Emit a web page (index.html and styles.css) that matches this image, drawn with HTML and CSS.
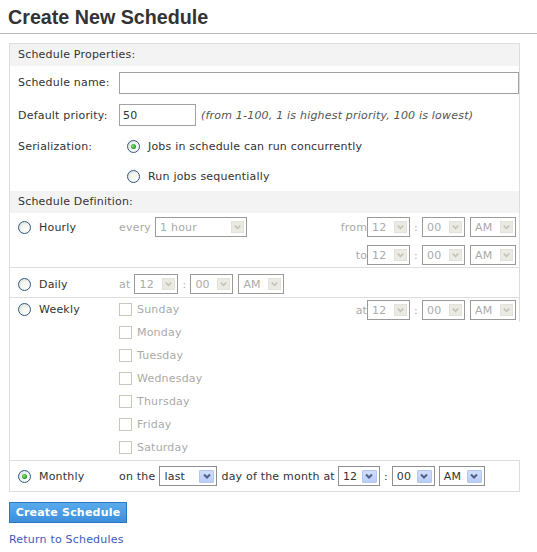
FILE: index.html
```html
<!DOCTYPE html>
<html>
<head>
<meta charset="utf-8">
<title>Create New Schedule</title>
<link rel="stylesheet" href="styles.css">
</head>
<body>
<h1 class="title">Create New Schedule</h1>
<div class="box">
  <div class="sec-head">Schedule Properties:</div>
  <div class="prop-row r1"><span class="lbl">Schedule name:</span><input class="txt name" type="text"></div>
  <div class="prop-row r2"><span class="lbl">Default priority:</span><input class="txt prio" type="text" value="50"><span class="hint">(from 1-100, 1 is highest priority, 100 is lowest)</span></div>
  <div class="prop-row r3"><span class="lbl">Serialization:</span><span class="radio on"></span><span class="opt">Jobs in schedule can run concurrently</span></div>
  <div class="prop-row r4"><span class="lbl"></span><span class="radio"></span><span class="opt">Run jobs sequentially</span></div>
  <div class="sec-head">Schedule Definition:</div>

  <div class="def hourly">
    <div class="dhead"><span class="radio"></span><span class="dlbl">Hourly</span></div>
    <div class="dbody split">
      <div class="line"><span class="muted gap">every</span><span class="sel dis w-every"><span class="v">1 hour</span><span class="arr"><svg viewBox="0 0 12 12"><path d="M3 4.5 L6 7.5 L9 4.5"/></svg></span></span></div>
      <div class="rcol">
        <div class="line"><span class="muted">from</span><span class="sel dis w12"><span class="v">12</span><span class="arr"><svg viewBox="0 0 12 12"><path d="M3 4.5 L6 7.5 L9 4.5"/></svg></span></span><span class="colon muted">:</span><span class="sel dis w00"><span class="v">00</span><span class="arr"><svg viewBox="0 0 12 12"><path d="M3 4.5 L6 7.5 L9 4.5"/></svg></span></span><span class="sel dis wam"><span class="v">AM</span><span class="arr"><svg viewBox="0 0 12 12"><path d="M3 4.5 L6 7.5 L9 4.5"/></svg></span></span></div>
        <div class="line"><span class="muted">to</span><span class="sel dis w12"><span class="v">12</span><span class="arr"><svg viewBox="0 0 12 12"><path d="M3 4.5 L6 7.5 L9 4.5"/></svg></span></span><span class="colon muted">:</span><span class="sel dis w00"><span class="v">00</span><span class="arr"><svg viewBox="0 0 12 12"><path d="M3 4.5 L6 7.5 L9 4.5"/></svg></span></span><span class="sel dis wam"><span class="v">AM</span><span class="arr"><svg viewBox="0 0 12 12"><path d="M3 4.5 L6 7.5 L9 4.5"/></svg></span></span></div>
      </div>
    </div>
  </div>

  <div class="def daily">
    <div class="dhead"><span class="radio"></span><span class="dlbl">Daily</span></div>
    <div class="dbody">
      <div class="line"><span class="muted gap">at</span><span class="sel dis w12d"><span class="v">12</span><span class="arr"><svg viewBox="0 0 12 12"><path d="M3 4.5 L6 7.5 L9 4.5"/></svg></span></span><span class="colon muted">:</span><span class="sel dis w00"><span class="v">00</span><span class="arr"><svg viewBox="0 0 12 12"><path d="M3 4.5 L6 7.5 L9 4.5"/></svg></span></span><span class="sel dis wam"><span class="v">AM</span><span class="arr"><svg viewBox="0 0 12 12"><path d="M3 4.5 L6 7.5 L9 4.5"/></svg></span></span></div>
    </div>
  </div>

  <div class="def weekly">
    <div class="dhead"><span class="radio"></span><span class="dlbl">Weekly</span></div>
    <div class="days">
      <div class="day"><span class="cb"></span>Sunday</div>
      <div class="day"><span class="cb"></span>Monday</div>
      <div class="day"><span class="cb"></span>Tuesday</div>
      <div class="day"><span class="cb"></span>Wednesday</div>
      <div class="day"><span class="cb"></span>Thursday</div>
      <div class="day"><span class="cb"></span>Friday</div>
      <div class="day"><span class="cb"></span>Saturday</div>
    </div>
    <div class="wtime">
      <div class="line"><span class="muted">at</span><span class="sel dis w12"><span class="v">12</span><span class="arr"><svg viewBox="0 0 12 12"><path d="M3 4.5 L6 7.5 L9 4.5"/></svg></span></span><span class="colon muted">:</span><span class="sel dis w00"><span class="v">00</span><span class="arr"><svg viewBox="0 0 12 12"><path d="M3 4.5 L6 7.5 L9 4.5"/></svg></span></span><span class="sel dis wam"><span class="v">AM</span><span class="arr"><svg viewBox="0 0 12 12"><path d="M3 4.5 L6 7.5 L9 4.5"/></svg></span></span></div>
    </div>
  </div>

  <div class="def monthly">
    <div class="dhead"><span class="radio on"></span><span class="dlbl">Monthly</span></div>
    <div class="dbody">
      <div class="line"><span class="gap">on the</span><span class="sel en wlast"><span class="v">last</span><span class="arr"><svg viewBox="0 0 12 12"><path d="M3 4.5 L6 7.5 L9 4.5"/></svg></span></span><span class="gap2">day of the month at</span><span class="sel en w12m"><span class="v">12</span><span class="arr"><svg viewBox="0 0 12 12"><path d="M3 4.5 L6 7.5 L9 4.5"/></svg></span></span><span class="colon">:</span><span class="sel en w00"><span class="v">00</span><span class="arr"><svg viewBox="0 0 12 12"><path d="M3 4.5 L6 7.5 L9 4.5"/></svg></span></span><span class="sel en wam2"><span class="v">AM</span><span class="arr"><svg viewBox="0 0 12 12"><path d="M3 4.5 L6 7.5 L9 4.5"/></svg></span></span></div>
    </div>
  </div>
</div>
<div class="actions">
  <button class="btn" type="button">Create Schedule</button>
  <a class="back" href="#">Return to Schedules</a>
</div>
</body>
</html>
```
FILE: styles.css
```css
html, body {
  margin: 0;
  padding: 0;
  background: #fff;
}
body {
  font-family: "DejaVu Sans", Verdana, sans-serif;
  font-size: 11px;
  letter-spacing: 0.2px;
  color: #333;
}
.title {
  margin: 0;
  padding: 6px 8px 4px;
  font: bold 19.7px/23px "Liberation Sans", Arial, sans-serif;
  letter-spacing: 0;
  color: #333;
  border-bottom: 1px solid #bbb;
}
.box {
  margin: 9px 0 0 9px;
  width: 510px;
  border: 1px solid #ddd;
  border-right: 0;
}
.sec-head {
  height: 22px;
  line-height: 22px;
  padding-left: 8px;
  background: #f3f3f3;
  border-right: 1px solid #ddd;
}
.prop-row {
  display: flex;
  align-items: center;
  padding-left: 8px;
  border-right: 1px solid #ddd;
}
.r1 { height: 33px; }
.r2 { height: 32px; }
.r3 { height: 30px; }
.r4 { height: 30px; }
.lbl {
  width: 101px;
  flex: none;
}
.txt {
  box-sizing: border-box;
  height: 22px;
  margin: 0;
  padding: 0 3px;
  border: 1px solid #a2a2a2;
  font-family: "DejaVu Sans", Verdana, sans-serif;
  font-size: 11px;
  letter-spacing: 0.2px;
  color: #333;
  outline: none;
}
.name { width: 400px; }
.prio { width: 77px; }
.hint {
  margin-left: 5px;
  font-style: italic;
  color: #555;
}
.radio {
  position: relative;
  flex: none;
  box-sizing: border-box;
  width: 13px;
  height: 13px;
  border-radius: 50%;
  border: 1px solid #2c5a85;
  background: radial-gradient(circle at 65% 65%, #ffffff 0%, #f4f4f0 45%, #d6d6ce 100%);
}
.prop-row .radio { margin-left: 8px; }
.radio.on::after {
  content: "";
  position: absolute;
  left: 3px;
  top: 3px;
  width: 5px;
  height: 5px;
  border-radius: 50%;
  background: radial-gradient(circle at 40% 40%, #8be58b 0%, #21a121 60%, #168a16 100%);
}
.opt { margin-left: 8px; }

.def {
  display: flex;
  padding-left: 8px;
  border-right: 1px solid #ddd;
  border-top: 1px solid #ddd;
}
.hourly { border-top: 0; padding-top: 4px; padding-bottom: 2px; }
.daily { padding-top: 6px; padding-bottom: 3px; }
.weekly { border-right: 0; padding-bottom: 1px; }
.monthly { padding-top: 5px; padding-bottom: 5px; }
.dhead {
  width: 101px;
  flex: none;
  display: flex;
  align-items: center;
  height: 20px;
}
.weekly .dhead { height: 23px; }
.dlbl { margin-left: 8px; }
.dbody { flex: 1; }
.split {
  display: flex;
  justify-content: space-between;
  padding-right: 3px;
}
.rcol {
  display: flex;
  flex-direction: column;
  align-items: flex-end;
  gap: 8px;
}
.line {
  display: flex;
  align-items: center;
  height: 20px;
}
.muted { color: #aaa; }
.gap { margin-right: 4px; }
.gap2 { margin: 0 3px 0 4px; }
.colon { margin: 0 4px; }
.sel {
  box-sizing: border-box;
  display: inline-flex;
  align-items: center;
  justify-content: space-between;
  height: 20px;
  padding: 0 2px 0 4px;
  border: 1px solid #999;
  flex: none;
}
.sel.dis { color: #aaa; border-color: #9a9a9a; }
.sel.en { color: #333; border-color: #8f8f8f; }
.wam, .wam2 { margin-left: 5px; }
.w-every { width: 92px; }
.w12 { width: 43px; }
.w12d { width: 44px; }
.w00 { width: 43px; }
.wam { width: 46px; }
.wlast { width: 58px; }
.w12m { width: 42px; }
.wam2 { width: 46px; margin-left: 4px; }
.arr {
  box-sizing: border-box;
  display: flex;
  align-items: center;
  justify-content: center;
  width: 13px;
  height: 12px;
}
.arr svg {
  width: 12px;
  height: 12px;
  fill: none;
  stroke-width: 1.8;
}
.dis .arr {
  background: #ebebe3;
  border: 1px solid #e2e2da;
}
.dis .arr svg { stroke: #c4c4bc; }
.en .arr {
  width: 15px;
  height: 13px;
  background: linear-gradient(#d2defc, #b9cdf8);
  border: 1px solid #b4c6ee;
  border-radius: 1px;
}
.en .arr svg { stroke: #4d6185; stroke-width: 2; }

.days {
  flex: 1;
  display: flex;
  flex-direction: column;
}
.day {
  display: flex;
  align-items: center;
  height: 23px;
  color: #aaa;
}
.cb {
  box-sizing: border-box;
  width: 13px;
  height: 13px;
  margin-right: 5px;
  border: 1px solid #cac8bb;
  background: #fff;
}
.wtime {
  align-self: flex-start;
  height: 24px;
  display: flex;
  align-items: center;
  padding-right: 3px;
  border-right: 1px solid #ddd;
}

.actions {
  padding: 10px 0 0 9px;
  display: flex;
  flex-direction: column;
  align-items: flex-start;
  gap: 10px;
}
.btn {
  box-sizing: border-box;
  width: 118px;
  height: 21px;
  margin: 0;
  padding: 0;
  border: 1px solid #2b78c2;
  background: linear-gradient(#5aaaec, #3d8fdc);
  color: #fff;
  font: bold 11px "DejaVu Sans", Verdana, sans-serif;
  letter-spacing: 0.2px;
}
.back {
  color: #3c5cbf;
  text-decoration: none;
  line-height: 13px;
}
```
